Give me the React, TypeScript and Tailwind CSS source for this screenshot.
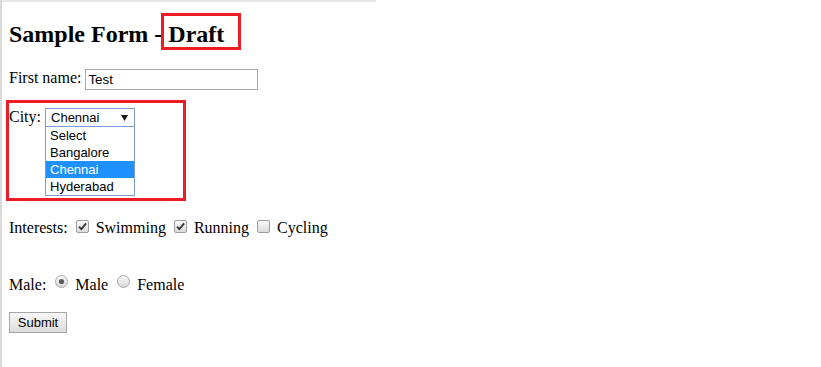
import React from "react";

function Check({ checked }: { checked?: boolean }) {
  return (
    <svg
      width="13"
      height="13"
      viewBox="0 0 13 13"
      className="inline-block align-baseline ml-[4px] mr-[3px]"
    >
      <defs>
        <linearGradient id="cbg" x1="0" y1="0" x2="0" y2="1">
          <stop offset="0" stopColor="#fbfbfb" />
          <stop offset="1" stopColor="#dadada" />
        </linearGradient>
      </defs>
      <rect x="0.5" y="0.5" width="12" height="12" rx="1.5" fill="url(#cbg)" stroke="#9d9d9d" />
      {checked && (
        <path d="M3 6.6 L5.4 9.1 L10.1 3.4" fill="none" stroke="#3a3a3a" strokeWidth="2" />
      )}
    </svg>
  );
}

function Radio({ checked }: { checked?: boolean }) {
  return (
    <svg
      width="13"
      height="13"
      viewBox="0 0 13 13"
      className="inline-block align-baseline ml-[5px] mr-[3px] mb-[2px]"
    >
      <defs>
        <linearGradient id="rbg" x1="0" y1="0" x2="0" y2="1">
          <stop offset="0" stopColor="#fafafa" />
          <stop offset="1" stopColor="#d6d6d6" />
        </linearGradient>
      </defs>
      <circle cx="6.5" cy="6.5" r="6" fill="url(#rbg)" stroke="#a8a8a8" />
      {checked && <circle cx="6.5" cy="6.5" r="2.6" fill="#5c5c5c" />}
    </svg>
  );
}

export default function App() {
  const items = ["Select", "Bangalore", "Chennai", "Hyderabad"];
  return (
    <div className="relative w-[821px] h-[367px] overflow-hidden bg-white border-l-2 border-[#d9d9d9] font-['Liberation_Serif',serif] text-[16px] text-black">
      <div className="h-[2px] w-[374px] bg-[#e6e6e6]" />
      <div className="pl-[7px]">
        <h2 className="mt-[18px] text-[24px] font-bold leading-[28px]">Sample Form - Draft</h2>

        <div className="mt-[21px] flex items-start">
          <span className="leading-[18px]">First name:</span>
          <span className="ml-[4px] block h-[21px] w-[173px] border border-[#a9a9a9] px-[2px] font-['Liberation_Sans',Arial,sans-serif] text-[13.33px] leading-[19px]">
            Test
          </span>
        </div>

        <div className="mt-[18px] flex items-start">
          <span className="leading-[17px]">City:</span>
          <div className="ml-[4px] w-[90px] font-['Liberation_Sans',Arial,sans-serif] text-[13px]">
            <div className="flex h-[19px] items-center justify-between border border-[#7b9bd6] pl-[5px] pr-[6px] leading-[17px]">
              <span>Chennai</span>
              <svg width="7" height="6" viewBox="0 0 7 6" className="block">
                <polygon points="0,0 7,0 3.5,6" fill="#1a1a1a" />
              </svg>
            </div>
            <div className="border-x border-b border-[#7b9bd6] leading-[17px]">
              {items.map((it) => (
                <div
                  key={it}
                  className={
                    it === "Chennai"
                      ? "h-[17px] bg-[#1e90ff] px-[4px] text-white"
                      : "h-[17px] px-[4px] text-black"
                  }
                >
                  {it}
                </div>
              ))}
            </div>
          </div>
        </div>

        <div className="mt-[23px] h-[18px] leading-[18px]">
          Interests:{" "}
          <Check checked />
          {" "}Swimming{" "}
          <Check checked />
          {" "}Running{" "}
          <Check />
          {" "}Cycling
        </div>

        <div className="mt-[38px] h-[18px] leading-[18px]">
          Male:{" "}
          <Radio checked />
          {" "}Male{" "}
          <Radio />
          {" "}Female
        </div>

        <div className="mt-[19px] flex">
          <span className="flex h-[21px] w-[58px] items-center justify-center border border-[#a6a6a6] bg-linear-to-b from-[#f7f7f7] to-[#dddddd] font-['Liberation_Sans',Arial,sans-serif] text-[13px] leading-[19px]">
            Submit
          </span>
        </div>
      </div>

      <div className="absolute left-[159px] top-[13px] h-[37px] w-[80px] border-[3px] border-[#ed1c24]" />
      <div className="absolute left-[4px] top-[100px] h-[101px] w-[180px] border-[3px] border-[#ed1c24]" />
    </div>
  );
}
